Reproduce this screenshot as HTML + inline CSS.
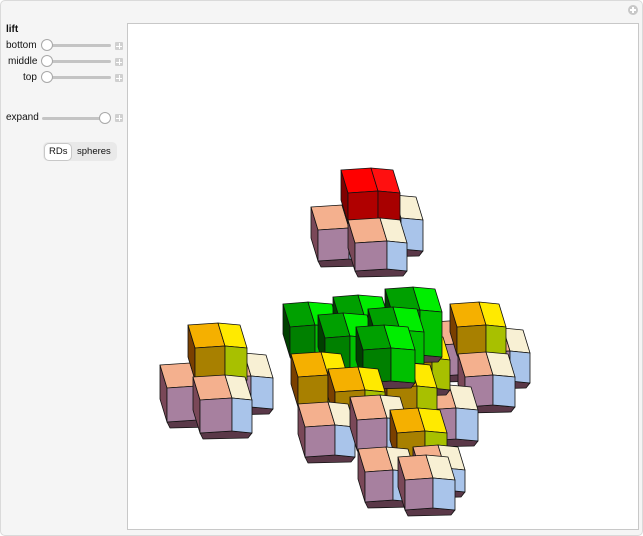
<!DOCTYPE html>
<html><head><style>
body{margin:0;width:643px;height:536px;background:#fff;overflow:hidden;font-family:"Liberation Sans",sans-serif;}
#win{position:absolute;left:0;top:0;width:641px;height:534px;background:#f5f5f5;border:1px solid #dadada;border-radius:5px;}
#gfx{position:absolute;left:126px;top:22px;width:510px;height:505px;background:#fff;border:1px solid #c8c8c8;}
.lbl{position:absolute;font-size:10px;color:#111;}
.trk{position:absolute;height:3px;background:#c4c4c4;border-radius:2px;}
.th{position:absolute;width:10px;height:10px;border-radius:50%;background:#fff;border:1px solid #a8a8a8;}
.pl{position:absolute;width:8px;height:8px;background:#d0d0d0;border-radius:1px;}
.pl:before{content:"";position:absolute;left:3.5px;top:1px;width:1px;height:6px;background:#fff}
.pl:after{content:"";position:absolute;left:1px;top:3.5px;width:6px;height:1px;background:#fff}
</style></head><body>
<div id="win">
<div class="lbl" style="left:5px;top:23px;font-weight:bold">lift</div>
<div class="lbl" style="left:5px;top:39px">bottom</div>
<div class="trk" style="left:42px;top:43px;width:68px"></div><div class="th" style="left:40px;top:38px"></div><div class="pl" style="left:114px;top:41px"></div>
<div class="lbl" style="left:7px;top:55px">middle</div>
<div class="trk" style="left:42px;top:59px;width:68px"></div><div class="th" style="left:40px;top:54px"></div><div class="pl" style="left:114px;top:57px"></div>
<div class="lbl" style="left:22px;top:71px">top</div>
<div class="trk" style="left:42px;top:75px;width:68px"></div><div class="th" style="left:40px;top:70px"></div><div class="pl" style="left:114px;top:73px"></div>
<div class="lbl" style="left:5px;top:111px">expand</div>
<div class="trk" style="left:41px;top:116px;width:64px"></div><div class="th" style="left:98px;top:111px"></div><div class="pl" style="left:114px;top:113px"></div>
<div style="position:absolute;left:42px;top:141px;width:74px;height:19px;background:#e9e9e9;border-radius:5px;"></div>
<div style="position:absolute;left:43px;top:142px;width:26px;height:16px;background:#fff;border:1px solid #c8c8c8;border-radius:5px;"></div>
<div class="lbl" style="left:48px;top:145px;font-size:9.5px">RDs</div>
<div class="lbl" style="left:76px;top:145px;font-size:9.5px">spheres</div>
<div style="position:absolute;left:627px;top:4px;width:10px;height:10px;border-radius:50%;background:#c8c8c8;"></div>
<div style="position:absolute;left:631px;top:6px;width:2px;height:6px;background:#fff"></div>
<div style="position:absolute;left:629px;top:8px;width:6px;height:2px;background:#fff"></div>
<div id="gfx"></div>
</div>
<svg id="s" width="643" height="536" style="position:absolute;left:0;top:0"></svg>
<script>
var P={
 pc:['#f4b08e','#f8f0d4','#a7809f','#a9c4ea','#7a4858'],
 oy:['#f5b000','#ffea00','#a88000','#a8c000','#7a4000'],
 rr:['#ff0000','#ff1010','#b00000','#a80000','#800000'],
 gg:['#00a000','#00ee00','#008000','#00c000','#004000']};
var out='';
function poly(pts,f){out+='<polygon points="'+pts.map(function(p){return p[0]+','+p[1]}).join(' ')+'" fill="'+f+'" stroke="#111" stroke-width="0.8" stroke-linejoin="round"/>';}
function u(x,y,t,wL,wR,h){wL=wL||31;wR=wR||22;h=h||31;var c=P[t],d=23,s=-7,W=wL+wR;
 poly([[x,y+h],[x+wL,y+h-2],[x+W,y+h],[x+W-4,y+h+5],[x+3,y+h+6]],'#5a3848');
 poly([[x+s,y-d],[x,y],[x,y+h],[x+s,y+h-d]],c[4]);
 poly([[x,y],[x+wL,y-2],[x+wL+s,y-2-d],[x+s,y-d]],c[0]);
 poly([[x+wL,y-2],[x+W,y],[x+W+s,y-d],[x+wL+s,y-2-d]],c[1]);
 poly([[x,y],[x+wL,y-2],[x+wL,y-2+h],[x,y+h]],c[2]);
 poly([[x+wL,y-2],[x+W,y],[x+W,y+h],[x+wL,y-2+h]],c[3]);}
// top group
u(370,220,'pc');u(318,230,'pc');u(348,193,'rr',30,22,30);u(355,243,'pc',32,20,28);
// left group
u(220,378,'pc');u(167,388,'pc',30,20,34);u(195,348,'oy',30,22,32);u(200,400,'pc',32,20,33);
// right group
u(440,345,'pc');u(485,353,'pc',25,20,30);u(457,327,'oy',29,20,28);u(465,377,'pc',28,22,30);
// center
u(425,410,'pc');u(410,360,'oy',22,18,30);
u(290,327,'gg',25,24,30);u(340,320,'gg',25,24,30);u(392,312,'gg',28,22,45);
u(325,338,'gg',25,24,32);u(375,332,'gg',25,24,32);
u(298,377,'oy',30,20,30);u(387,388,'oy',30,20,27);u(363,350,'gg',28,24,33);
u(335,392,'oy',30,20,28);
u(305,427,'pc',30,20,30);u(357,420,'pc',30,20,30);u(397,433,'oy',28,22,30);
u(420,470,'pc',25,20,22);u(365,472,'pc',28,22,30);u(405,480,'pc',28,22,30);
document.getElementById('s').innerHTML=out;
</script>
</body></html>
